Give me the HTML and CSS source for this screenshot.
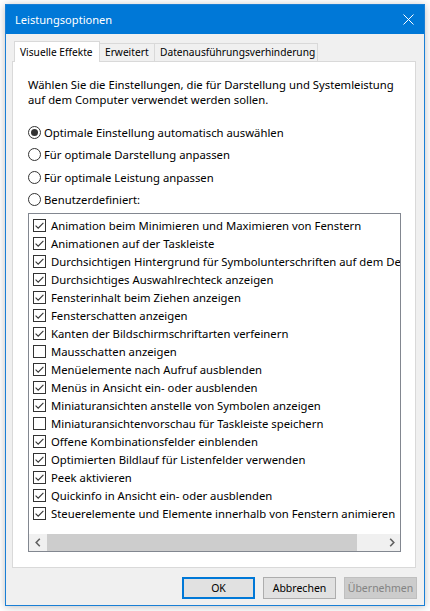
FILE: index.html
```html
<!DOCTYPE html>
<html lang="de">
<head>
<meta charset="utf-8">
<title>Leistungsoptionen</title>
<link rel="stylesheet" href="styles.css">
</head>
<body>
<svg class="defs" width="0" height="0" aria-hidden="true">
  <symbol id="cb-on" viewBox="0 0 13 13">
    <rect x="0.5" y="0.5" width="12" height="12" fill="#fff" stroke="#333"/>
    <polyline points="2.6,6.6 5.2,9.2 10.4,3.8" fill="none" stroke="#333" stroke-width="1.1"/>
  </symbol>
  <symbol id="cb-off" viewBox="0 0 13 13">
    <rect x="0.5" y="0.5" width="12" height="12" fill="#fff" stroke="#333"/>
  </symbol>
  <symbol id="rb-on" viewBox="0 0 13 13">
    <circle cx="6.5" cy="6.5" r="6" fill="#fff" stroke="#333"/>
    <circle cx="6.5" cy="6.5" r="3.5" fill="#333"/>
  </symbol>
  <symbol id="rb-off" viewBox="0 0 13 13">
    <circle cx="6.5" cy="6.5" r="6" fill="#fff" stroke="#333"/>
  </symbol>
</svg>
<div class="window">
  <div class="titlebar">
    <span class="title">Leistungsoptionen</span>
    <svg class="close" width="11" height="11" viewBox="0 0 11 11"><path d="M0.5 0.5L10.5 10.5M10.5 0.5L0.5 10.5" stroke="#fff" stroke-width="1"/></svg>
  </div>
  <div class="body">
    <div class="tabs">
      <div class="tab active">Visuelle Effekte</div>
      <div class="tab t2">Erweitert</div>
      <div class="tab t3">Datenausführungsverhinderung</div>
    </div>
    <div class="panel">
      <p class="intro">Wählen Sie die Einstellungen, die für Darstellung und Systemleistung<br>auf dem Computer verwendet werden sollen.</p>
      <div class="radios">
        <div class="radio"><svg class="rb"><use href="#rb-on"/></svg><span>Optimale Einstellung automatisch auswählen</span></div>
        <div class="radio"><svg class="rb"><use href="#rb-off"/></svg><span>Für optimale Darstellung anpassen</span></div>
        <div class="radio"><svg class="rb"><use href="#rb-off"/></svg><span>Für optimale Leistung anpassen</span></div>
        <div class="radio"><svg class="rb"><use href="#rb-off"/></svg><span>Benutzerdefiniert:</span></div>
      </div>
      <div class="listbox">
        <div class="rows">
          <div class="row"><svg class="cb"><use href="#cb-on"/></svg><span>Animation beim Minimieren und Maximieren von Fenstern</span></div>
          <div class="row"><svg class="cb"><use href="#cb-on"/></svg><span>Animationen auf der Taskleiste</span></div>
          <div class="row"><svg class="cb"><use href="#cb-on"/></svg><span>Durchsichtigen Hintergrund für Symbolunterschriften auf dem Desktop</span></div>
          <div class="row"><svg class="cb"><use href="#cb-on"/></svg><span>Durchsichtiges Auswahlrechteck anzeigen</span></div>
          <div class="row"><svg class="cb"><use href="#cb-on"/></svg><span>Fensterinhalt beim Ziehen anzeigen</span></div>
          <div class="row"><svg class="cb"><use href="#cb-on"/></svg><span>Fensterschatten anzeigen</span></div>
          <div class="row"><svg class="cb"><use href="#cb-on"/></svg><span>Kanten der Bildschirmschriftarten verfeinern</span></div>
          <div class="row"><svg class="cb"><use href="#cb-off"/></svg><span>Mausschatten anzeigen</span></div>
          <div class="row"><svg class="cb"><use href="#cb-on"/></svg><span>Menüelemente nach Aufruf ausblenden</span></div>
          <div class="row"><svg class="cb"><use href="#cb-on"/></svg><span>Menüs in Ansicht ein- oder ausblenden</span></div>
          <div class="row"><svg class="cb"><use href="#cb-on"/></svg><span>Miniaturansichten anstelle von Symbolen anzeigen</span></div>
          <div class="row"><svg class="cb"><use href="#cb-off"/></svg><span>Miniaturansichtenvorschau für Taskleiste speichern</span></div>
          <div class="row"><svg class="cb"><use href="#cb-on"/></svg><span>Offene Kombinationsfelder einblenden</span></div>
          <div class="row"><svg class="cb"><use href="#cb-on"/></svg><span>Optimierten Bildlauf für Listenfelder verwenden</span></div>
          <div class="row"><svg class="cb"><use href="#cb-on"/></svg><span>Peek aktivieren</span></div>
          <div class="row"><svg class="cb"><use href="#cb-on"/></svg><span>Quickinfo in Ansicht ein- oder ausblenden</span></div>
          <div class="row"><svg class="cb"><use href="#cb-on"/></svg><span>Steuerelemente und Elemente innerhalb von Fenstern animieren</span></div>
        </div>
        <div class="hscroll">
          <div class="arrow"><svg width="6" height="9" viewBox="0 0 6 9"><polyline points="4.8,0.8 1.2,4.5 4.8,8.2" fill="none" stroke="#606060" stroke-width="1.6"/></svg></div>
          <div class="thumb"></div>
          <div class="track"></div>
          <div class="arrow"><svg width="6" height="9" viewBox="0 0 6 9"><polyline points="1.2,0.8 4.8,4.5 1.2,8.2" fill="none" stroke="#606060" stroke-width="1.6"/></svg></div>
        </div>
      </div>
    </div>
    <div class="buttons">
      <div class="btn default">OK</div>
      <div class="btn">Abbrechen</div>
      <div class="btn disabled">Übernehmen</div>
    </div>
  </div>
</div>
</body>
</html>
```
FILE: styles.css
```css
html, body {
  margin: 0;
  padding: 0;
}
body {
  width: 430px;
  height: 611px;
  overflow: hidden;
  background: #ffffff;
  font-family: "Segoe UI", "Noto Sans", sans-serif;
  font-size: 11.3px;
  color: #000;
}
.defs {
  position: absolute;
  width: 0;
  height: 0;
}
.window {
  margin: 4px 0 0 5px;
  width: 420px;
  height: 602px;
  box-sizing: border-box;
  border: 1px solid #1a7fd5;
  background: #f0f0f0;
  box-shadow: 0 1px 8px rgba(0, 0, 0, 0.25);
  display: flex;
  flex-direction: column;
}
.titlebar {
  height: 29px;
  flex: none;
  background: #0078d7;
  color: #fff;
  display: flex;
  align-items: center;
  justify-content: space-between;
  padding: 0 10px 0 9px;
}
.title {
  font-size: 11.1px;
}
.close {
  display: block;
}
.body {
  flex: 1;
  display: flex;
  flex-direction: column;
}
.tabs {
  display: flex;
  align-items: flex-end;
  height: 20px;
  margin: 7px 0 0 8px;
}
.tab {
  box-sizing: border-box;
  height: 18px;
  border: 1px solid #d9d9d9;
  border-bottom: none;
  padding-left: 5px;
  line-height: 17px;
  font-size: 10.2px;
  background: #f0f0f0;
  white-space: nowrap;
  overflow: hidden;
}
.tab.active {
  width: 86px;
  height: 21px;
  line-height: 20px;
  margin-bottom: -1px;
  background: #fff;
  position: relative;
  z-index: 1;
}
.tab.t2 {
  width: 55px;
  border-left: none;
}
.tab.t3 {
  width: 163px;
  border-left: none;
}
.panel {
  box-sizing: border-box;
  height: 507px;
  margin: 0 8px 0 6px;
  border: 1px solid #d9d9d9;
  background: #fff;
  padding: 15px 0 0 15px;
}
.intro {
  margin: 0;
  line-height: 15px;
  white-space: nowrap;
}
.radios {
  margin-top: 14px;
  display: flex;
  flex-direction: column;
}
.radio {
  height: 22.5px;
  display: flex;
  align-items: center;
  gap: 3px;
  white-space: nowrap;
}
.rb, .cb {
  width: 13px;
  height: 13px;
  flex: none;
  display: block;
}
.listbox {
  margin-top: 2px;
  width: 373px;
  height: 339px;
  box-sizing: border-box;
  border: 1px solid #828790;
  background: #fff;
  display: flex;
  flex-direction: column;
}
.rows {
  flex: 1;
  overflow: hidden;
  padding: 2px 0 0 4px;
}
.row {
  height: 18px;
  display: flex;
  align-items: center;
  gap: 5px;
  white-space: nowrap;
}
.hscroll {
  flex: none;
  height: 17px;
  display: flex;
  background: #f0f0f0;
}
.arrow {
  width: 17px;
  flex: none;
  display: flex;
  align-items: center;
  justify-content: center;
}
.thumb {
  width: 310px;
  flex: none;
  margin-left: 1px;
  background: #cdcdcd;
}
.track {
  flex: 1;
}
.buttons {
  display: flex;
  justify-content: flex-end;
  gap: 8px;
  margin-top: 9px;
  padding-right: 7px;
}
.btn {
  box-sizing: border-box;
  width: 73px;
  height: 22px;
  border: 1px solid #adadad;
  background: #e1e1e1;
  display: flex;
  align-items: center;
  justify-content: center;
  font-size: 10.5px;
  white-space: nowrap;
}
.btn.default {
  border: 2px solid #0078d7;
}
.btn.disabled {
  background: #cccccc;
  border-color: #bfbfbf;
  color: #838383;
}
```
